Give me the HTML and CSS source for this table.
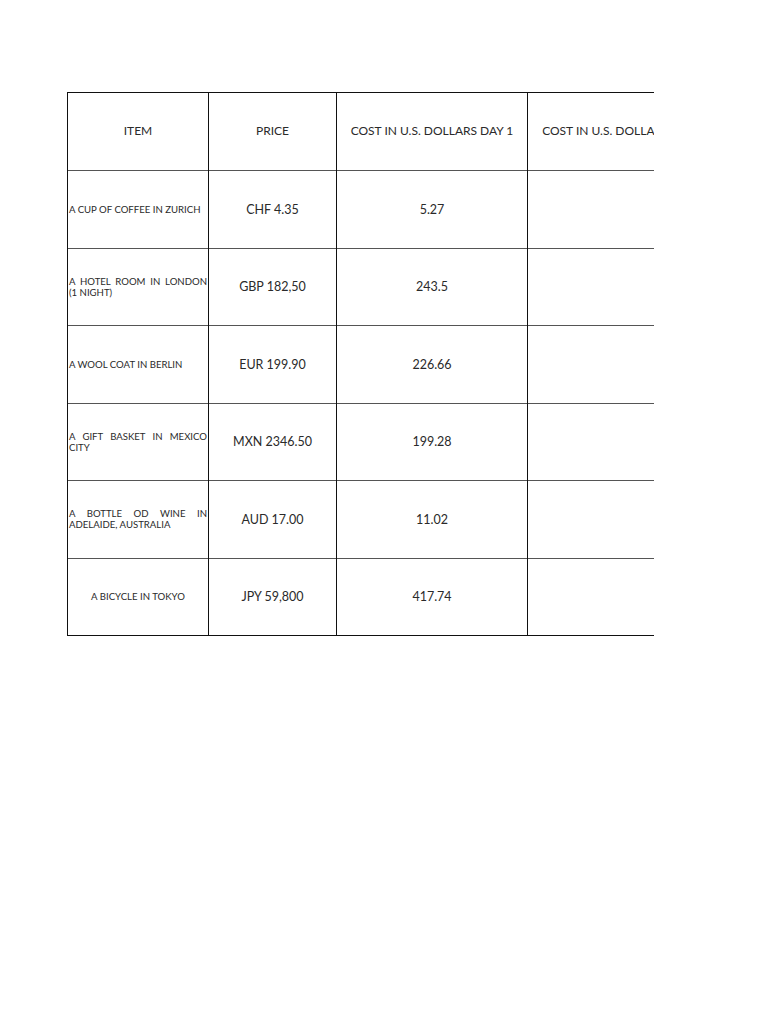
FILE: index.html
```html
<!DOCTYPE html>
<html>
<head>
<meta charset="utf-8">
<link rel="stylesheet" href="styles.css">
</head>
<body>
<div class="page">
  <div class="clip">
    <table class="sheet">
      <colgroup>
        <col class="c1"><col class="c2"><col class="c3"><col class="c4">
      </colgroup>
      <tr class="head">
        <td>ITEM</td>
        <td>PRICE</td>
        <td>COST IN U.S. DOLLARS DAY 1</td>
        <td>COST IN U.S. DOLLARS DAY 2</td>
      </tr>
      <tr>
        <td class="item">A CUP OF COFFEE IN ZURICH</td>
        <td>CHF 4.35</td>
        <td>5.27</td>
        <td></td>
      </tr>
      <tr>
        <td class="item">A HOTEL ROOM IN LONDON (1 NIGHT)</td>
        <td>GBP 182,50</td>
        <td>243.5</td>
        <td></td>
      </tr>
      <tr>
        <td class="item">A WOOL COAT IN BERLIN</td>
        <td>EUR 199.90</td>
        <td>226.66</td>
        <td></td>
      </tr>
      <tr>
        <td class="item">A GIFT BASKET IN MEXICO CITY</td>
        <td>MXN 2346.50</td>
        <td>199.28</td>
        <td></td>
      </tr>
      <tr>
        <td class="item">A BOTTLE OD WINE IN ADELAIDE, AUSTRALIA</td>
        <td>AUD 17.00</td>
        <td>11.02</td>
        <td></td>
      </tr>
      <tr class="last">
        <td class="item center">A BICYCLE IN TOKYO</td>
        <td>JPY 59,800</td>
        <td>417.74</td>
        <td></td>
      </tr>
    </table>
  </div>
</div>
</body>
</html>
```
FILE: styles.css
```css
html, body {
  margin: 0;
  padding: 0;
  background: #ffffff;
}
.page {
  padding: 92px 0 0 67px;
}
.clip {
  width: 587px;
  overflow: hidden;
}
.sheet {
  border-collapse: collapse;
  table-layout: fixed;
  width: 652px;
  font-family: Lato, "Liberation Sans", sans-serif;
  color: #2a2a2a;
}
.c1 { width: 141px; }
.c2 { width: 128px; }
.c3 { width: 191px; }
.c4 { width: 192px; }
.sheet td {
  border-left: 1px solid #111;
  border-right: 1px solid #111;
  border-top: 1.5px solid #555;
  height: 76.5px;
  padding: 0;
  text-align: center;
  vertical-align: middle;
  font-size: 12.5px;
  white-space: nowrap;
}
.sheet tr.head td {
  border-top: 1px solid #111;
  font-size: 12px;
  height: 74px;
  padding-bottom: 3px;
}
.sheet tr.last td {
  border-bottom: 1px solid #111;
}
.sheet td.item {
  font-size: 9.6px;
  text-align: justify;
  text-align-last: left;
  white-space: normal;
  line-height: 11px;
  padding: 0 1px;
}
.sheet td.item.center {
  text-align: center;
  text-align-last: center;
}
```
